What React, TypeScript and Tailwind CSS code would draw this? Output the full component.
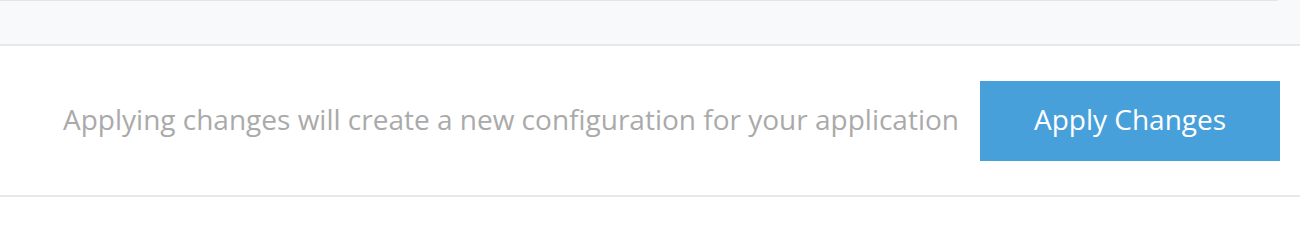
export default function App() {
  return (
    <div className="w-[1300px] bg-white" style={{ fontFamily: '"Open Sans", sans-serif' }}>
      <div className="h-[46px] bg-[#f8f9fb] border-b-2 border-[#e6e8eb] pr-[22px]">
        <div className="h-px bg-[#e3e5e8]" />
      </div>
      <div className="h-[151px] border-b-2 border-[#e8e8e8] flex items-center justify-end pr-[20px] gap-[21px]">
        <span className="text-[28px] text-[#aaaaaa] leading-none pb-[4px]">
          Applying changes will create a new configuration for your application
        </span>
        <button className="w-[300px] h-[80px] bg-[#48a0db] text-white text-[28px] leading-none pb-[4px]">
          Apply Changes
        </button>
      </div>
    </div>
  );
}
